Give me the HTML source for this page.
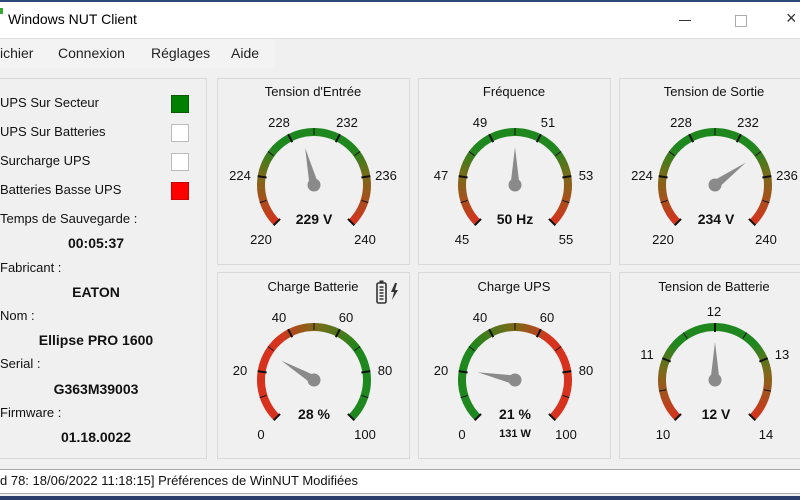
<!DOCTYPE html>
<html><head><meta charset="utf-8"><style>
body{margin:0;width:800px;height:500px;overflow:hidden;background:#f0f0f0;font-family:"Liberation Sans",sans-serif;position:relative}
.a{position:absolute}
.title{left:0;top:0;width:800px;height:38px;background:#fff;border-top:2px solid #2b4a7a;box-sizing:border-box}
.menu{top:38px;left:0;width:800px;height:29px;background:#f0f0f0;border-top:1px solid #ddd}
.box{border:1px solid #d9d9d9;background:#f0f0f0;box-sizing:border-box}
.lt{font-size:13px;color:#111;left:0}
.lv{font-size:14px;font-weight:bold;color:#111;width:192px;text-align:center}
.sq{left:171px;width:18px;height:18px;box-sizing:border-box;border:1px solid #bbb;background:#fff}
svg text{font-family:"Liberation Sans",sans-serif}
</style></head><body>
<div class="a title">
<div class="a" style="left:0;top:6px;width:3px;height:6px;background:#3a3"></div>
<div class="a" style="left:8px;top:9px;font-size:14px;color:#000">Windows NUT Client</div>
<div class="a" style="left:679px;top:18px;width:12px;height:1px;background:#333"></div>
<div class="a" style="left:735px;top:13px;width:10px;height:10px;border:1px solid #aaa"></div>
<div class="a" style="left:786px;top:6px;font-size:18px;color:#333">×</div>
</div>
<div class="a menu">
<div class="a" style="left:0;top:0;width:275px;height:29px;background:#f3f3f3"></div>
<div class="a" style="left:0;top:6px;font-size:14px;color:#222">ichier</div>
<div class="a" style="left:58px;top:6px;font-size:14px;color:#222">Connexion</div>
<div class="a" style="left:151px;top:6px;font-size:14px;color:#222">Réglages</div>
<div class="a" style="left:231px;top:6px;font-size:14px;color:#222">Aide</div>
</div>
<div class="a box" style="left:-2px;top:78px;width:209px;height:381px"></div>
<div class="a lt" style="top:95px">UPS Sur Secteur</div><div class="a sq" style="top:95px;background:#008000;border-color:#0a5a0a"></div>
<div class="a lt" style="top:124px">UPS Sur Batteries</div><div class="a sq" style="top:124px"></div>
<div class="a lt" style="top:153px">Surcharge UPS</div><div class="a sq" style="top:153px"></div>
<div class="a lt" style="top:182px">Batteries Basse UPS</div><div class="a sq" style="top:182px;background:#f00;border-color:#c00"></div>
<div class="a lt" style="top:211px">Temps de Sauvegarde :</div><div class="a lv" style="top:235px">00:05:37</div>
<div class="a lt" style="top:260px">Fabricant :</div><div class="a lv" style="top:284px">EATON</div>
<div class="a lt" style="top:308px">Nom :</div><div class="a lv" style="top:332px">Ellipse PRO 1600</div>
<div class="a lt" style="top:356px">Serial :</div><div class="a lv" style="top:381px">G363M39003</div>
<div class="a lt" style="top:405px">Firmware :</div><div class="a lv" style="top:429px">01.18.0022</div>
<div class="a box" style="left:217px;top:78px;width:193px;height:187px"></div>
<div class="a box" style="left:418px;top:78px;width:193px;height:187px"></div>
<div class="a box" style="left:619px;top:78px;width:193px;height:187px"></div>
<div class="a box" style="left:217px;top:272px;width:193px;height:187px"></div>
<div class="a box" style="left:418px;top:272px;width:193px;height:187px"></div>
<div class="a box" style="left:619px;top:272px;width:193px;height:187px"></div>
<svg id="g" class="a" style="left:0;top:0" width="800" height="500" font-size="13" fill="#111">
<g text-anchor="middle">
<text x="313" y="96">Tension d'Entrée</text>
<text x="514" y="96">Fréquence</text>
<text x="714" y="96">Tension de Sortie</text>
<text x="313" y="291">Charge Batterie</text>
<text x="514" y="291">Charge UPS</text>
<text x="714" y="291">Tension de Batterie</text>
</g>
<g text-anchor="middle" font-size="13">
<text x="261" y="244">220</text><text x="240" y="180">224</text><text x="279" y="127">228</text><text x="347" y="127">232</text><text x="386" y="180">236</text><text x="365" y="244">240</text>
<text x="462" y="244">45</text><text x="441" y="180">47</text><text x="480" y="127">49</text><text x="548" y="127">51</text><text x="586" y="180">53</text><text x="566" y="244">55</text>
<text x="663" y="244">220</text><text x="642" y="180">224</text><text x="681" y="127">228</text><text x="748" y="127">232</text><text x="787" y="180">236</text><text x="766" y="244">240</text>
<text x="261" y="439">0</text><text x="240" y="375">20</text><text x="279" y="322">40</text><text x="346" y="322">60</text><text x="385" y="375">80</text><text x="365" y="439">100</text>
<text x="462" y="439">0</text><text x="441" y="375">20</text><text x="480" y="322">40</text><text x="547" y="322">60</text><text x="586" y="375">80</text><text x="566" y="439">100</text>
<text x="663" y="439">10</text><text x="647" y="359">11</text><text x="714" y="316">12</text><text x="782" y="359">13</text><text x="766" y="439">14</text>
</g>
<g text-anchor="middle" font-size="14" font-weight="bold">
<text x="314" y="224">229 V</text><text x="515" y="224">50 Hz</text><text x="716" y="224">234 V</text>
<text x="314" y="419">28 %</text><text x="515" y="419">21 %</text><text x="716" y="419">12 V</text>
<text x="515" y="437" font-size="11">131 W</text>
</g>
<g fill="none" stroke="#333" stroke-width="1.6">
<rect x="377" y="283" width="9" height="20" rx="1.5"/><rect x="379.5" y="280.5" width="4" height="2.5" fill="#333" stroke="none"/>
<path d="M379.5 287h4M379.5 290h4M379.5 293h4M379.5 296h4M379.5 299h4" stroke-width="1.5"/>
</g>
<path d="M395 283l-4 9h3l-2 8 6-10h-3l2-7z" fill="#333"/>
</svg>
<div class="a" style="left:0;top:469px;width:800px;height:25px;background:#fff;border-top:1px solid #aaa;border-bottom:1px solid #aaa;box-sizing:border-box"></div>
<div class="a" style="left:0;top:473px;font-size:13px;color:#111">d 78: 18/06/2022 11:18:15] Préférences de WinNUT Modifiées</div>
<div class="a" style="left:0;top:496px;width:800px;height:4px;background:#2b3e6b"></div>
<script>
var s=document.getElementById('g'),N='http://www.w3.org/2000/svg';
function el(t,a){var e=document.createElementNS(N,t);for(var k in a)e.setAttribute(k,a[k]);s.appendChild(e);}
function mix(a,b,t){t=Math.max(0,Math.min(1,t));return 'rgb('+a.map((v,i)=>Math.round(v+(b[i]-v)*t)).join(',')+')';}
var R=[215,50,30],Y=[125,105,25],G=[30,135,30];
function col(mode,f){
 if(mode==0){var d=Math.abs(f-0.5)*2;return d<0.35?mix(G,G,0):(d<0.6?mix(G,Y,(d-0.35)/0.25):mix(Y,R,(d-0.6)/0.4));}
 if(mode==2)f=1-f;
 return f<0.35?mix(R,R,0):(f<0.5?mix(R,Y,(f-0.35)/0.15):mix(Y,G,(f-0.5)/0.2));}
function P(cx,cy,r,a){a=a*Math.PI/180;return [cx+r*Math.sin(a),cy-r*Math.cos(a)];}
function gauge(cx,cy,mode,majors,val){
 var n=40;for(var i=0;i<n;i++){var a1=-135+270*i/n,a2=-135+270*(i+1)/n+0.5;var p1=P(cx,cy,53,a1),p2=P(cx,cy,53,a2);
  el('path',{d:'M'+p1+' A53 53 0 0 1 '+p2,stroke:col(mode,(i+0.5)/n),'stroke-width':8,fill:'none'});}
 var mn=(majors-1)*2;for(var i=0;i<=mn;i++){var a=-135+270*i/mn,maj=i%2==0;var p1=P(cx,cy,maj?48:50,a),p2=P(cx,cy,57,a);
  el('line',{x1:p1[0],y1:p1[1],x2:p2[0],y2:p2[1],stroke:'#111','stroke-width':maj?2:1});}
 var a=-135+270*val,t=P(cx,cy,38,a),l=P(cx,cy,4.5,a-90),r=P(cx,cy,4.5,a+90);
 el('path',{d:'M'+t+' L'+l+' L'+r+'Z',fill:'#8a8a8a'});
 el('circle',{cx:cx,cy:cy,r:6.5,fill:'#8a8a8a'});
}
gauge(314,185,0,6,0.45);gauge(515,185,0,6,0.5);gauge(715,185,0,6,0.7);
gauge(314,380,1,6,0.28);gauge(515,380,2,6,0.21);gauge(715,380,0,5,0.5);
</script>
</body></html>
